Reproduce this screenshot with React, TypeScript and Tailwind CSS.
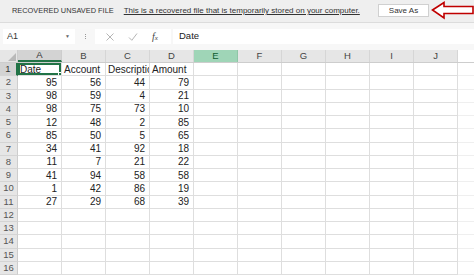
import { FunctionComponent } from "react";

const cols = ["A", "B", "C", "D", "E", "F", "G", "H", "I", "J"];

const rows: (string | number)[][] = [
  ["Date", "Account", "Description", "Amount"],
  [95, 56, 44, 79],
  [98, 59, 4, 21],
  [98, 75, 73, 10],
  [12, 48, 2, 85],
  [85, 50, 5, 65],
  [34, 41, 92, 18],
  [11, 7, 21, 22],
  [41, 94, 58, 58],
  [1, 42, 86, 19],
  [27, 29, 68, 39],
  [],
  [],
  [],
  [],
  [],
];

const font = { fontFamily: '"Liberation Sans", Arial, sans-serif' };

const App: FunctionComponent = () => {
  return (
    <div className="w-[474px] h-[277px] overflow-hidden bg-white text-[#222]" style={font}>
      {/* recovered file message bar */}
      <div className="h-[23px] flex items-center bg-[#efefef] border-b border-[#dcdcdc] pl-[12px]">
        <span className="text-[7.4px] text-[#333]">RECOVERED UNSAVED FILE</span>
        <span className="ml-[10px] text-[8px] text-[#333] underline">
          This is a recovered file that is temporarily stored on your computer.
        </span>
        <button className="ml-auto mt-[-2px] h-[13px] w-[51px] bg-white border border-[#d0d0d0] text-[8px] text-[#333]">
          Save As
        </button>
        <svg width="43" height="20" viewBox="0 0 43 20" className="ml-[2px] mt-[-1px]">
          <path
            d="M1.5 9 L13 1.5 L13 5.5 L42 5.5 L42 12.5 L13 12.5 L13 17 Z"
            fill="white"
            stroke="#c00000"
            strokeWidth="1.6"
            strokeLinejoin="miter"
          />
        </svg>
      </div>

      {/* formula bar */}
      <div className="h-[27px] flex items-center bg-[#f7f7f7] pl-[3px]">
        <div className="w-[72px] h-[15px] bg-white flex items-center justify-between pl-[4px] pr-[5px]">
          <span className="text-[9px] text-[#333]">A1</span>
          <span className="text-[5px] text-[#666]">▼</span>
        </div>
        <div className="w-[20px] flex flex-col items-center gap-[1px]">
          <span className="w-[1px] h-[1px] bg-[#999]" />
          <span className="w-[1px] h-[1px] bg-[#999]" />
          <span className="w-[1px] h-[1px] bg-[#999]" />
        </div>
        <div className="w-[76px] h-[15px] bg-white flex items-center">
          <svg width="10" height="10" viewBox="0 0 10 10" className="ml-[10px]">
            <path d="M1.5 1.5 L8.5 8.5 M8.5 1.5 L1.5 8.5" stroke="#b5b5b5" strokeWidth="1" />
          </svg>
          <svg width="10" height="10" viewBox="0 0 10 10" className="ml-[13px]">
            <path d="M1 5.5 L3.8 8.3 L9 1.5" stroke="#b5b5b5" strokeWidth="1" fill="none" />
          </svg>
          <span className="ml-[14px] text-[10px] italic text-[#444]" style={{ fontFamily: '"Liberation Serif", serif' }}>
            f<span className="text-[7px]">x</span>
          </span>
        </div>
        <div className="ml-[2px] flex-1 h-[15px] bg-white flex items-center pl-[6px]">
          <span className="text-[9.5px] text-[#222]">Date</span>
        </div>
      </div>

      {/* column headers */}
      <div className="flex h-[13px] bg-[#e6e6e6] border-b border-[#cdcdcd]">
        <div className="w-[18px] relative border-r border-[#cdcdcd]">
          <svg width="8" height="8" viewBox="0 0 8 8" className="absolute right-[1px] bottom-[1px]">
            <path d="M8 0 L8 8 L0 8 Z" fill="#b9b9b9" />
          </svg>
        </div>
        {cols.map((c) => (
          <div
            key={c}
            className={
              c === "A"
                ? "w-[44px] flex items-center justify-center text-[9.5px] text-[#333] bg-[#d3d3d3] border-r border-[#cdcdcd] border-b-2 border-b-[#217346]"
                : c === "E"
                ? "w-[44px] flex items-center justify-center text-[9.5px] text-[#0e5c2f] bg-[#9fd5b7] border-r border-[#8fc6a7]"
                : "w-[44px] flex items-center justify-center text-[9.5px] text-[#444] border-r border-[#d6d6d6]"
            }
          >
            {c}
          </div>
        ))}
        <div className="flex-1 bg-white" />
      </div>

      {/* sheet rows */}
      {rows.map((r, ri) => (
        <div key={ri} className="flex h-[13.25px]">
          <div
            className={
              ri === 0
                ? "w-[18px] flex items-center justify-center text-[9.5px] text-[#333] bg-[#d3d3d3] border-r-2 border-[#217346] border-b border-b-[#d4d4d4]"
                : "w-[18px] flex items-center justify-center text-[9.5px] text-[#555] bg-[#e6e6e6] border-r border-[#cdcdcd] border-b border-b-[#d4d4d4]"
            }
          >
            {ri + 1}
          </div>
          {cols.map((c, ci) => {
            const v = r[ci];
            const isText = typeof v === "string";
            return (
              <div
                key={c}
                className={
                  "w-[44px] relative flex items-center overflow-hidden whitespace-nowrap text-[10px] border-r border-b border-[#dedede] " +
                  (isText ? "justify-start pl-[2px]" : "justify-end pr-[4px]")
                }
              >
                {v !== undefined ? v : ""}
                {ri === 0 && ci === 0 && (
                  <>
                    <div className="absolute inset-0 border-2 border-[#217346]" />
                    <div className="absolute right-[-1px] bottom-[-1px] w-[4px] h-[4px] bg-[#217346] border border-white" />
                  </>
                )}
              </div>
            );
          })}
          <div className="flex-1 border-b border-[#efefef]" />
        </div>
      ))}
    </div>
  );
};

export default App;
